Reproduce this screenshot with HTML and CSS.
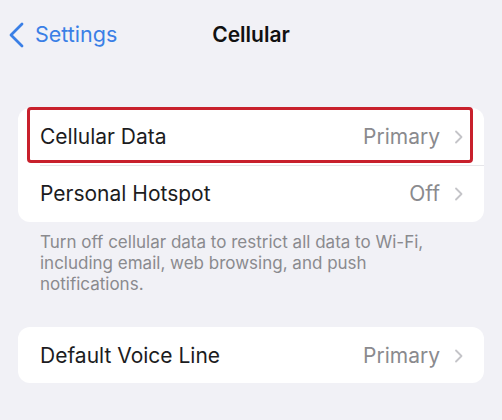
FILE: index.html
```html
<!DOCTYPE html>
<html>
<head>
<title>Cellular</title>
<link rel="stylesheet" href="styles.css">
</head>
<body>
	<div class="nav">
		<a class="back" href="#">
			<svg class="back-icon" width="17" height="26" viewBox="0 0 17 26">
				<path d="M14 2 L3 13 L14 24" fill="none" stroke="#3a7fe6" stroke-width="2.8" stroke-linecap="round" stroke-linejoin="round"/>
			</svg>
			<span>Settings</span>
		</a>
		<div class="title">Cellular</div>
	</div>

	<div class="group">
		<div class="row">
			<span class="label">Cellular Data</span>
			<span class="value">Primary</span>
			<svg class="chev" width="9" height="14" viewBox="0 0 9 14"><path d="M2 1.5 L7.5 7 L2 12.5" fill="none" stroke="#c4c4c8" stroke-width="1.8" stroke-linecap="round" stroke-linejoin="round"/></svg>
			<div class="mark"></div>
		</div>
		<div class="row">
			<span class="label">Personal Hotspot</span>
			<span class="value">Off</span>
			<svg class="chev" width="9" height="14" viewBox="0 0 9 14"><path d="M2 1.5 L7.5 7 L2 12.5" fill="none" stroke="#c4c4c8" stroke-width="1.8" stroke-linecap="round" stroke-linejoin="round"/></svg>
		</div>
	</div>
	<p class="note">Turn off cellular data to restrict all data to Wi-Fi, including email, web browsing, and push notifications.</p>

	<div class="group">
		<div class="row">
			<span class="label">Default Voice Line</span>
			<span class="value">Primary</span>
			<svg class="chev" width="9" height="14" viewBox="0 0 9 14"><path d="M2 1.5 L7.5 7 L2 12.5" fill="none" stroke="#c4c4c8" stroke-width="1.8" stroke-linecap="round" stroke-linejoin="round"/></svg>
		</div>
	</div>
</body>
</html>
```
FILE: styles.css
```css
* {
	box-sizing: border-box;
}
body {
	margin: 0;
	background-color: #f1f1f6;
	font-family: "Inter", "Liberation Sans", sans-serif;
	color: #1c1c1e;
	height: 420px;
	overflow: hidden;
}
.nav {
	position: relative;
	height: 68px;
	display: flex;
	align-items: center;
	padding: 0 0 0 8px;
}
.back {
	display: flex;
	align-items: center;
	gap: 10px;
	color: #3a7fe6;
	text-decoration: none;
	font-size: 21.5px;
	position: relative;
	z-index: 1;
}
.back-icon {
	margin-top: 1px;
}
.title {
	position: absolute;
	left: 0;
	right: 0;
	text-align: center;
	font-size: 21px;
	font-weight: 600;
	color: #111;
}
.group {
	margin: 0 18px;
	background-color: #fff;
	border-radius: 12px;
}
.nav + .group {
	margin-top: 40px;
}
.row {
	position: relative;
	height: 57px;
	display: flex;
	align-items: center;
	padding: 0 21px 0 22px;
}
.row + .row::before {
	content: "";
	position: absolute;
	top: 0;
	left: 22px;
	right: 0;
	height: 1px;
	background-color: #e6e6ea;
}
.label {
	flex: 1;
	font-size: 21px;
}
.value {
	font-size: 21px;
	color: #8a8a8e;
	margin-right: 14px;
}
.chev {
	margin-top: 1px;
}
.mark {
	position: absolute;
	left: 9px;
	right: 11px;
	top: -1px;
	bottom: 2px;
	border: 3px solid #c8202c;
	border-radius: 4px;
}
.note {
	margin: 10px 44px 0 40px;
	font-size: 17px;
	line-height: 21px;
	color: #8a8a8e;
}
.note + .group {
	margin-top: 32px;
}
.group:last-child .row {
	height: 56px;
}
```
